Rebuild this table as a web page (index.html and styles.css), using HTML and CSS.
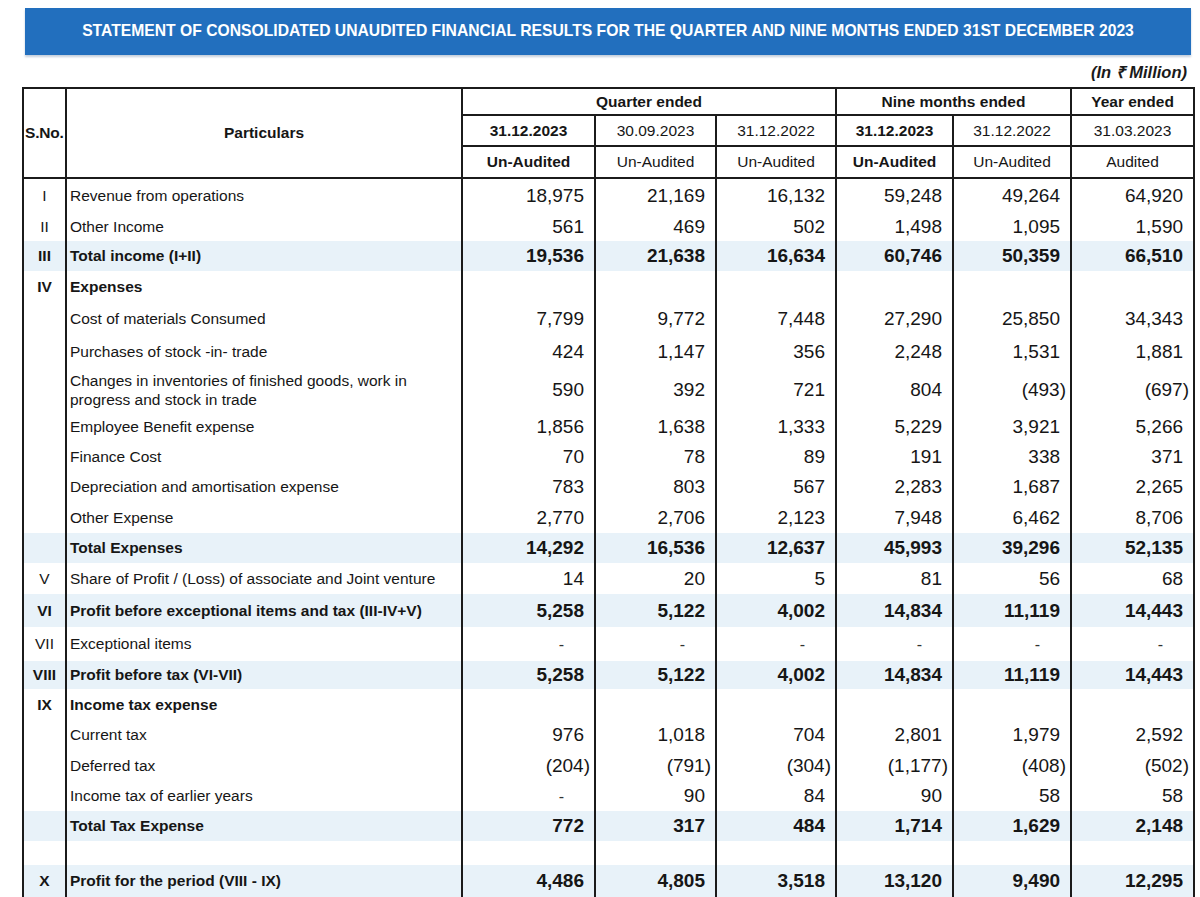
FILE: index.html
```html
<!DOCTYPE html>
<html lang="en">
<head>
<meta charset="utf-8">
<title>Statement of Consolidated Unaudited Financial Results</title>
<link rel="stylesheet" href="styles.css">
</head>
<body>
<div class="page">
  <div class="banner"><h1>STATEMENT OF CONSOLIDATED UNAUDITED FINANCIAL RESULTS FOR THE QUARTER AND NINE MONTHS ENDED 31ST DECEMBER 2023</h1></div>
  <div class="unit"><span>(In ₹ Million)</span></div>
  <table class="fin">
    <colgroup>
      <col class="c-sno"><col class="c-part"><col class="c-q1"><col class="c-q2"><col class="c-q3"><col class="c-n1"><col class="c-n2"><col class="c-y">
    </colgroup>
    <thead>
      <tr class="hr1">
        <th rowspan="3" class="sno-h">S.No.</th>
        <th rowspan="3">Particulars</th>
        <th colspan="3">Quarter ended</th>
        <th colspan="2">Nine months ended</th>
        <th>Year ended</th>
      </tr>
      <tr class="hr2">
        <th>31.12.2023</th>
        <th class="reg">30.09.2023</th>
        <th class="reg">31.12.2022</th>
        <th>31.12.2023</th>
        <th class="reg">31.12.2022</th>
        <th class="reg">31.03.2023</th>
      </tr>
      <tr class="hr3">
        <th>Un-Audited</th>
        <th class="reg">Un-Audited</th>
        <th class="reg">Un-Audited</th>
        <th>Un-Audited</th>
        <th class="reg">Un-Audited</th>
        <th class="reg">Audited</th>
      </tr>
    </thead>
    <tbody>
      <tr class="h33"><td class="sno">I</td><td class="lbl">Revenue from operations</td><td>18,975</td><td>21,169</td><td>16,132</td><td>59,248</td><td>49,264</td><td>64,920</td></tr>
      <tr class="h29"><td class="sno">II</td><td class="lbl">Other Income</td><td>561</td><td>469</td><td>502</td><td>1,498</td><td>1,095</td><td>1,590</td></tr>
      <tr class="h30 tot"><td class="sno">III</td><td class="lbl">Total income (I+II)</td><td>19,536</td><td>21,638</td><td>16,634</td><td>60,746</td><td>50,359</td><td>66,510</td></tr>
      <tr class="h32 bold"><td class="sno">IV</td><td class="lbl">Expenses</td><td></td><td></td><td></td><td></td><td></td><td></td></tr>
      <tr><td class="sno"></td><td class="lbl">Cost of materials Consumed</td><td>7,799</td><td>9,772</td><td>7,448</td><td>27,290</td><td>25,850</td><td>34,343</td></tr>
      <tr class="h35"><td class="sno"></td><td class="lbl">Purchases of stock -in- trade</td><td>424</td><td>1,147</td><td>356</td><td>2,248</td><td>1,531</td><td>1,881</td></tr>
      <tr class="h42"><td class="sno"></td><td class="lbl two">Changes in inventories of finished goods, work in progress and stock in trade</td><td>590</td><td>392</td><td>721</td><td>804</td><td><span class="neg">(493)</span></td><td><span class="neg">(697)</span></td></tr>
      <tr><td class="sno"></td><td class="lbl">Employee Benefit expense</td><td>1,856</td><td>1,638</td><td>1,333</td><td>5,229</td><td>3,921</td><td>5,266</td></tr>
      <tr class="h29"><td class="sno"></td><td class="lbl">Finance Cost</td><td>70</td><td>78</td><td>89</td><td>191</td><td>338</td><td>371</td></tr>
      <tr><td class="sno"></td><td class="lbl">Depreciation and amortisation expense</td><td>783</td><td>803</td><td>567</td><td>2,283</td><td>1,687</td><td>2,265</td></tr>
      <tr><td class="sno"></td><td class="lbl">Other Expense</td><td>2,770</td><td>2,706</td><td>2,123</td><td>7,948</td><td>6,462</td><td>8,706</td></tr>
      <tr class="h30 tot"><td class="sno"></td><td class="lbl">Total Expenses</td><td>14,292</td><td>16,536</td><td>12,637</td><td>45,993</td><td>39,296</td><td>52,135</td></tr>
      <tr><td class="sno">V</td><td class="lbl">Share of Profit / (Loss) of associate and Joint venture</td><td>14</td><td>20</td><td>5</td><td>81</td><td>56</td><td>68</td></tr>
      <tr class="h33 tot"><td class="sno">VI</td><td class="lbl">Profit before exceptional items and tax (III-IV+V)</td><td>5,258</td><td>5,122</td><td>4,002</td><td>14,834</td><td>11,119</td><td>14,443</td></tr>
      <tr class="h34"><td class="sno">VII</td><td class="lbl">Exceptional items</td><td><span class="dash">-</span></td><td><span class="dash">-</span></td><td><span class="dash">-</span></td><td><span class="dash">-</span></td><td><span class="dash">-</span></td><td><span class="dash">-</span></td></tr>
      <tr class="h28 tot"><td class="sno">VIII</td><td class="lbl">Profit before tax (VI-VII)</td><td>5,258</td><td>5,122</td><td>4,002</td><td>14,834</td><td>11,119</td><td>14,443</td></tr>
      <tr class="bold"><td class="sno">IX</td><td class="lbl">Income tax expense</td><td></td><td></td><td></td><td></td><td></td><td></td></tr>
      <tr class="h30"><td class="sno"></td><td class="lbl">Current tax</td><td>976</td><td>1,018</td><td>704</td><td>2,801</td><td>1,979</td><td>2,592</td></tr>
      <tr><td class="sno"></td><td class="lbl">Deferred tax</td><td><span class="neg">(204)</span></td><td><span class="neg">(791)</span></td><td><span class="neg">(304)</span></td><td><span class="neg">(1,177)</span></td><td><span class="neg">(408)</span></td><td><span class="neg">(502)</span></td></tr>
      <tr class="h30"><td class="sno"></td><td class="lbl">Income tax of earlier years</td><td><span class="dash">-</span></td><td>90</td><td>84</td><td>90</td><td>58</td><td>58</td></tr>
      <tr class="h30 tot"><td class="sno"></td><td class="lbl">Total Tax Expense</td><td>772</td><td>317</td><td>484</td><td>1,714</td><td>1,629</td><td>2,148</td></tr>
      <tr class="h24"><td class="sno"></td><td class="lbl"></td><td></td><td></td><td></td><td></td><td></td><td></td></tr>
      <tr class="h32 tot"><td class="sno">X</td><td class="lbl">Profit for the period (VIII - IX)</td><td>4,486</td><td>4,805</td><td>3,518</td><td>13,120</td><td>9,490</td><td>12,295</td></tr>
      <tr class="h30"><td class="sno"></td><td class="lbl"></td><td></td><td></td><td></td><td></td><td></td><td></td></tr>
    </tbody>
  </table>
</div>
</body>
</html>
```

FILE: styles.css
```css
html, body {
  margin: 0;
  padding: 0;
  background: #ffffff;
}

body {
  font-family: "Liberation Sans", Arial, sans-serif;
  color: #161616;
}

.page {
  padding: 8px 0 0 22px;
  width: 1178px;
}

.banner {
  margin-left: 3px;
  width: 1166px;
  height: 47px;
  background: #226fbe;
  display: flex;
  align-items: center;
  justify-content: center;
  box-shadow: 0 2px 2px rgba(20, 60, 110, 0.25);
}

.banner h1 {
  margin: 0 0 2px 0;
  font-size: 15.7px;
  font-weight: bold;
  color: #ffffff;
  white-space: nowrap;
}

.unit {
  height: 32px;
  display: flex;
  align-items: center;
  justify-content: flex-end;
  width: 1165px;
}

.unit span {
  font-size: 16.5px;
  font-weight: bold;
  font-style: italic;
  color: #1a1a1a;
}

.fin {
  border-collapse: collapse;
  table-layout: fixed;
  width: 1171px;
  border-top: 2px solid #1b1b1b;
  border-left: 2px solid #1b1b1b;
  border-right: 2px solid #1b1b1b;
}

.c-sno { width: 43px; }
.c-part { width: 396px; }
.c-q1 { width: 133px; }
.c-q2 { width: 121px; }
.c-q3 { width: 120px; }
.c-n1 { width: 117px; }
.c-n2 { width: 118px; }
.c-y { width: 123px; }

.fin th {
  font-size: 15.5px;
  font-weight: bold;
  text-align: center;
  vertical-align: middle;
  padding: 0;
  border: 2px solid #1b1b1b;
  white-space: nowrap;
}

.fin th.reg {
  font-weight: normal;
}

.fin th.sno-h {
  text-align: left;
  padding-left: 1px;
  letter-spacing: -0.2px;
}

.hr1 th { height: 25px; }
.hr2 th { height: 29px; }
.hr3 th { height: 30px; }

.fin td {
  height: 31px;
  padding: 0 10px 0 3px;
  border-left: 2px solid #1b1b1b;
  border-right: 2px solid #1b1b1b;
  font-size: 19px;
  text-align: right;
  vertical-align: middle;
  white-space: nowrap;
}

.fin td.sno {
  font-size: 15.5px;
  text-align: center;
  padding: 0;
}

.fin td.lbl {
  font-size: 15.5px;
  text-align: left;
  padding-left: 3px;
  padding-right: 4px;
}

.fin td.lbl.two {
  white-space: normal;
  line-height: 19px;
}

.h24 td { height: 24px; }
.h28 td { height: 28px; }
.h29 td { height: 29px; }
.h30 td { height: 30px; }
.h32 td { height: 32px; }
.h33 td { height: 33px; }
.h34 td { height: 34px; }
.h35 td { height: 35px; }
.h42 td { height: 42px; }

.tot td {
  font-weight: bold;
  background: #e8f2f9;
}

.tot td.sno { font-weight: bold; }

.bold td { font-weight: bold; }

.neg {
  display: inline-block;
  margin-right: -6px;
}

.dash {
  display: inline-block;
  margin-right: 20px;
  font-size: 16px;
  color: #333;
}
```
